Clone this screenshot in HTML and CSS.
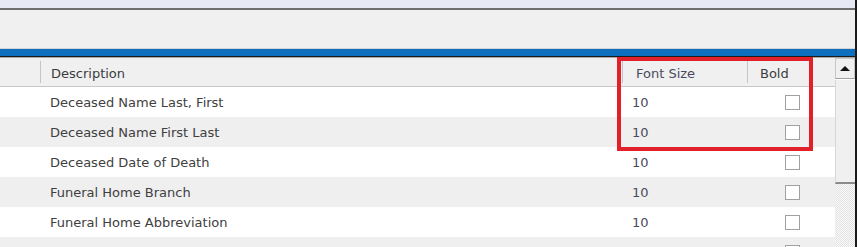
FILE: index.html
```html
<!DOCTYPE html>
<html lang="en">
<head>
    <meta charset="UTF-8">
    <title>Label Fields</title>
    <link rel="stylesheet" href="styles.css">
</head>
<body>
    <div class="window">
        <div class="top-strip"></div>
        <div class="toolbar"></div>
        <div class="accent-bar"></div>

        <div class="grid-area">
            <div class="grid">
                <div class="grid-row header-row">
                    <div class="cell selector"></div>
                    <div class="cell desc">Description</div>
                    <div class="cell size">Font Size</div>
                    <div class="cell bold">Bold</div>
                </div>
                <div class="grid-row">
                    <div class="cell selector"></div>
                    <div class="cell desc">Deceased Name Last, First</div>
                    <div class="cell size">10</div>
                    <div class="cell bold"><span class="checkbox"></span></div>
                </div>
                <div class="grid-row alt">
                    <div class="cell selector"></div>
                    <div class="cell desc">Deceased Name First Last</div>
                    <div class="cell size">10</div>
                    <div class="cell bold"><span class="checkbox"></span></div>
                </div>
                <div class="grid-row">
                    <div class="cell selector"></div>
                    <div class="cell desc">Deceased Date of Death</div>
                    <div class="cell size">10</div>
                    <div class="cell bold"><span class="checkbox"></span></div>
                </div>
                <div class="grid-row alt">
                    <div class="cell selector"></div>
                    <div class="cell desc">Funeral Home Branch</div>
                    <div class="cell size">10</div>
                    <div class="cell bold"><span class="checkbox"></span></div>
                </div>
                <div class="grid-row">
                    <div class="cell selector"></div>
                    <div class="cell desc">Funeral Home Abbreviation</div>
                    <div class="cell size">10</div>
                    <div class="cell bold"><span class="checkbox"></span></div>
                </div>
                <div class="grid-row alt">
                    <div class="cell selector"></div>
                    <div class="cell desc"></div>
                    <div class="cell size"></div>
                    <div class="cell bold"><span class="checkbox"></span></div>
                </div>

                <!-- highlight drawn over the Font Size / Bold columns -->
                <div class="highlight-box"></div>
            </div>

            <div class="scrollbar">
                <div class="scroll-btn"><span class="arrow-up"></span></div>
                <div class="scroll-thumb"></div>
                <div class="scroll-track"></div>
            </div>
        </div>
    </div>
</body>
</html>
```

FILE: styles.css
```css
body {
    margin: 0;
    padding: 0;
    background-color: #ffffff;
    font-family: 'DejaVu Sans', 'Liberation Sans', sans-serif;
    color: #404040;
    height: 247px;
    overflow: hidden;
}

.window {
    width: 855px;
    border-right: 2px solid #1a1a1a;
    display: flex;
    flex-direction: column;
}

.top-strip {
    height: 8px;
    background-color: #e6e9f3;
    border-bottom: 2px solid #6e6e6e;
}

.toolbar {
    height: 38px;
    background-color: #f0f0f0;
    border-bottom: 1px solid #d4d4d4;
}

.accent-bar {
    height: 7px;
    background-color: #0f6fbf;
    border-bottom: 1px solid #1c1c1c;
    box-shadow: 0 1px 0 #a8a8a8;
    margin-bottom: 1px;
}

.grid-area {
    display: flex;
}

.grid {
    flex: 1;
    position: relative;
}

.grid-row {
    display: grid;
    grid-template-columns: 40px 582px 125px 88px;
    height: 30px;
    background-color: #ffffff;
}

.grid-row.alt {
    background-color: #efefef;
}

.header-row {
    height: 28px;
    background-color: #f0f0f0;
    border-bottom: 1px solid #c8c8c8;
}

.cell {
    display: flex;
    align-items: center;
    font-size: 13px;
    white-space: nowrap;
    padding-top: 1px;
}

.header-row .cell {
    border-left: 1px solid #c4c4c4;
    margin: 3px 0;
    padding-top: 3px;
    padding-left: 12px;
    color: #3c3c3c;
}

.header-row .cell.selector {
    border-left: none;
    padding-left: 0;
}

.grid-row .desc {
    padding-left: 10px;
}

.grid-row .size {
    padding-left: 10px;
    color: #4a4a5e;
}

.header-row .size {
    padding-left: 13px;
}

.grid-row .bold {
    padding-left: 38px;
}

.header-row .bold {
    padding-left: 12px;
}

.checkbox {
    width: 13px;
    height: 13px;
    border: 1px solid #a0a0a0;
    background-color: #ffffff;
}

.highlight-box {
    position: absolute;
    left: 617px;
    top: -1px;
    width: 188px;
    height: 86px;
    border: 4px solid #e3202a;
}

.scrollbar {
    width: 20px;
    display: flex;
    flex-direction: column;
}

.scroll-btn {
    height: 21px;
    border: 1px solid #c8c8c8;
    border-bottom-color: #a0a0a0;
    background-color: #f0f0f0;
    display: flex;
    align-items: center;
    justify-content: center;
    box-sizing: border-box;
}

.arrow-up {
    width: 0;
    height: 0;
    border-left: 5px solid transparent;
    border-right: 5px solid transparent;
    border-bottom: 5px solid #111111;
}

.scroll-thumb {
    height: 102px;
    margin-top: 1px;
    background-color: #f0f0f0;
    border-left: 1px solid #d8d8d8;
    border-bottom: 2px solid #8a8a8a;
}

.scroll-track {
    flex: 1;
    height: 80px;
    background-color: #f4f4f4;
    background-image: repeating-conic-gradient(#e2e2e2 0% 25%, #fafafa 0% 50%);
    background-size: 2px 2px;
}
```
